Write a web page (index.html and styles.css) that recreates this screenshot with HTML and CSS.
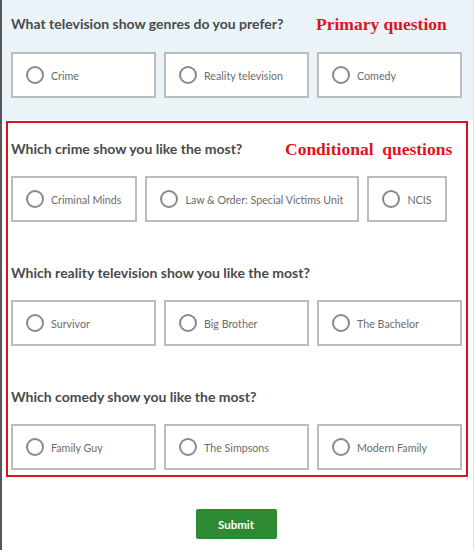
FILE: index.html
```html
<!DOCTYPE html>
<html lang="en">
<head>
<meta charset="utf-8">
<title>Survey</title>
<link rel="stylesheet" href="styles.css">
</head>
<body>
<div class="page">
  <section class="primary">
    <h2 class="question">What television show genres do you prefer?</h2>
    <span class="note note-primary">Primary question</span>
    <div class="options options-grid">
      <label class="option"><span class="radio"></span><span class="label">Crime</span></label>
      <label class="option"><span class="radio"></span><span class="label">Reality television</span></label>
      <label class="option"><span class="radio"></span><span class="label">Comedy</span></label>
    </div>
  </section>

  <section class="conditional">
    <span class="note note-conditional">Conditional&nbsp; questions</span>
    <div class="group">
      <h2 class="question">Which crime show you like the most?</h2>
      <div class="options options-flow">
        <label class="option"><span class="radio"></span><span class="label">Criminal Minds</span></label>
        <label class="option"><span class="radio"></span><span class="label">Law &amp; Order: Special Victims Unit</span></label>
        <label class="option"><span class="radio"></span><span class="label">NCIS</span></label>
      </div>
    </div>
    <div class="group">
      <h2 class="question">Which reality television show you like the most?</h2>
      <div class="options options-grid">
        <label class="option"><span class="radio"></span><span class="label">Survivor</span></label>
        <label class="option"><span class="radio"></span><span class="label">Big Brother</span></label>
        <label class="option"><span class="radio"></span><span class="label">The Bachelor</span></label>
      </div>
    </div>
    <div class="group">
      <h2 class="question">Which comedy show you like the most?</h2>
      <div class="options options-grid">
        <label class="option"><span class="radio"></span><span class="label">Family Guy</span></label>
        <label class="option"><span class="radio"></span><span class="label">The Simpsons</span></label>
        <label class="option"><span class="radio"></span><span class="label">Modern Family</span></label>
      </div>
    </div>
  </section>

  <div class="actions">
    <button class="submit" type="button">Submit</button>
  </div>
</div>
</body>
</html>
```
FILE: styles.css
```css
* { box-sizing: border-box; }

html, body {
  margin: 0;
  padding: 0;
  background: #ffffff;
}

body {
  font-family: "Lato", "Noto Sans", sans-serif;
}

.page {
  position: relative;
  width: 474px;
  height: 550px;
  border-left: 2px solid #55575a;
  border-right: 1px solid #e3e7ea;
  background: #ffffff;
}

.primary {
  position: relative;
  background: #e9f3f8;
  height: 120px;
  padding: 15px 11px 0 9px;
}

.question {
  margin: 0;
  font-size: 14px;
  line-height: 18px;
  font-weight: 700;
  color: #4a4a4a;
}

.primary .question {
  margin-bottom: 19px;
}

.note {
  position: absolute;
  font-family: "Liberation Serif", "Times New Roman", serif;
  font-weight: 700;
  color: #e0121d;
  font-size: 17.5px;
  line-height: 20px;
  white-space: nowrap;
}

.note-primary {
  left: 314px;
  top: 14px;
}

.note-conditional {
  left: 277px;
  top: 16px;
}

.options {
  display: flex;
  gap: 8px;
}

.options-grid {
  display: grid;
  grid-template-columns: repeat(3, 1fr);
}

.option {
  display: flex;
  align-items: center;
  height: 46px;
  padding: 0 14px 0 13px;
  background: #ffffff;
  border: 2px solid #bcbcbc;
  white-space: nowrap;
}

.radio {
  flex: none;
  width: 18px;
  height: 18px;
  border: 2.5px solid #8a8a8a;
  border-radius: 50%;
  margin-right: 7px;
}

.label {
  font-size: 10.7px;
  color: #6c6c6c;
}

.conditional {
  position: relative;
  margin: 1px 5px 0 4px;
  border: 2px solid #d9141e;
  padding: 17px 4px 5px 3px;
}

.group + .group {
  margin-top: 42px;
}

.group .question {
  margin-bottom: 18px;
}

.actions {
  display: flex;
  justify-content: center;
  padding-top: 32px;
  padding-right: 3px;
}

.submit {
  width: 81px;
  height: 30px;
  border: none;
  border-radius: 2px;
  background: #2e8a32;
  color: #ffffff;
  font-family: "Lato", "Noto Sans", sans-serif;
  font-size: 11.5px;
  font-weight: 700;
}
```
